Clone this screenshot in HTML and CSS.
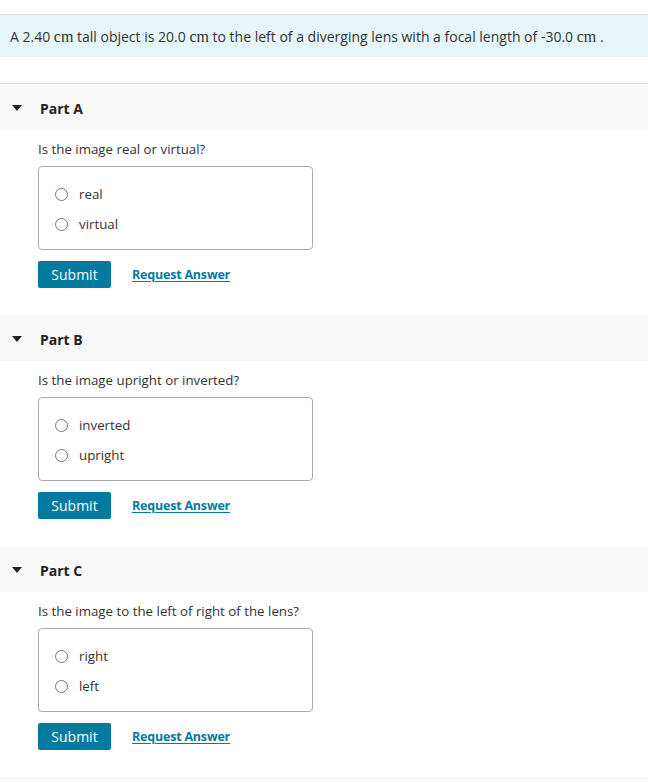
FILE: index.html
```html
<!DOCTYPE html>
<html>
<head>
<meta charset="utf-8">
<link rel="stylesheet" href="styles.css">
</head>
<body>
<div class="top-space"></div>
<div class="problem"><span class="problem-text">A 2.40 <span class="math">cm</span> tall object is 20.0 <span class="math">cm</span> to the left of a diverging lens with a focal length of -30.0 <span class="math">cm</span> .</span></div>
<div class="gap"></div>

<section class="part">
  <div class="part-head"><span class="tri"></span><span class="part-title">Part A</span></div>
  <div class="part-body">
    <div class="question">Is the image real or virtual?</div>
    <div class="choices">
      <label class="choice"><span class="radio"></span>real</label>
      <label class="choice"><span class="radio"></span>virtual</label>
    </div>
    <div class="actions"><button class="submit">Submit</button><a class="req" href="#">Request Answer</a></div>
  </div>
</section>

<section class="part">
  <div class="part-head"><span class="tri"></span><span class="part-title">Part B</span></div>
  <div class="part-body">
    <div class="question">Is the image upright or inverted?</div>
    <div class="choices">
      <label class="choice"><span class="radio"></span>inverted</label>
      <label class="choice"><span class="radio"></span>upright</label>
    </div>
    <div class="actions"><button class="submit">Submit</button><a class="req" href="#">Request Answer</a></div>
  </div>
</section>

<section class="part">
  <div class="part-head"><span class="tri"></span><span class="part-title">Part C</span></div>
  <div class="part-body">
    <div class="question">Is the image to the left of right of the lens?</div>
    <div class="choices">
      <label class="choice"><span class="radio"></span>right</label>
      <label class="choice"><span class="radio"></span>left</label>
    </div>
    <div class="actions"><button class="submit">Submit</button><a class="req" href="#">Request Answer</a></div>
  </div>
</section>
<div class="part-head tail"></div>
</body>
</html>
```
FILE: styles.css
```css
html, body {
  margin: 0;
  padding: 0;
  background: #fff;
  font-family: "Open Sans", "Noto Sans", sans-serif;
  color: #333;
}
.top-space { height: 14px; }
.problem {
  border-top: 1px solid #e2e2e2;
  background: #e6f6f8;
  height: 43px;
  box-sizing: border-box;
  padding: 0 10px;
  display: flex;
  align-items: center;
}
.problem-text {
  font-size: 14px;
  letter-spacing: 0;
  white-space: nowrap;
}
.math {
  font-family: "Liberation Serif", "DejaVu Serif", serif;
  font-size: 16px;
  letter-spacing: 0;
}
.gap {
  height: 26px;
  border-bottom: 1px solid #e2e2e2;
}
.part-head {
  height: 46px;
  box-sizing: border-box;
  padding-top: 2px;
  background: #f8f8f8;
  display: flex;
  align-items: center;
}
.part-head.tail { height: 6px; padding: 0; }
.tri {
  width: 0;
  height: 0;
  border-left: 5px solid transparent;
  border-right: 5px solid transparent;
  border-top: 6px solid #222;
  margin-left: 12px;
  margin-right: 18px;
}
.part-title {
  font-weight: 700;
  font-size: 14px;
  color: #222;
}
.part-body {
  padding: 10px 0 27px 38px;
}
.question {
  font-size: 13.3px;
  line-height: 18px;
  color: #333;
  margin-bottom: 8px;
}
.choices {
  width: 275px;
  height: 84px;
  box-sizing: border-box;
  border: 1px solid #aaa;
  border-radius: 4px;
  padding: 18px 0 0 16px;
  display: flex;
  flex-direction: column;
  gap: 12px;
}
.choice {
  display: flex;
  align-items: center;
  height: 18px;
  font-size: 13.3px;
  color: #333;
}
.radio {
  width: 11px;
  height: 11px;
  border: 1px solid #777;
  border-radius: 50%;
  margin-right: 11px;
  box-sizing: content-box;
}
.actions {
  margin-top: 11px;
  display: flex;
  align-items: center;
  gap: 21px;
}
.submit {
  width: 73px;
  height: 27px;
  border: 0;
  border-radius: 2px;
  background: #007a9e;
  color: #fff;
  font-family: "Open Sans", "Noto Sans", sans-serif;
  font-size: 14px;
  padding: 0;
}
.req {
  color: #007a9e;
  font-weight: 700;
  font-size: 12.5px;
  letter-spacing: -0.2px;
  text-decoration: underline;
  text-underline-offset: 2px;
}
```
